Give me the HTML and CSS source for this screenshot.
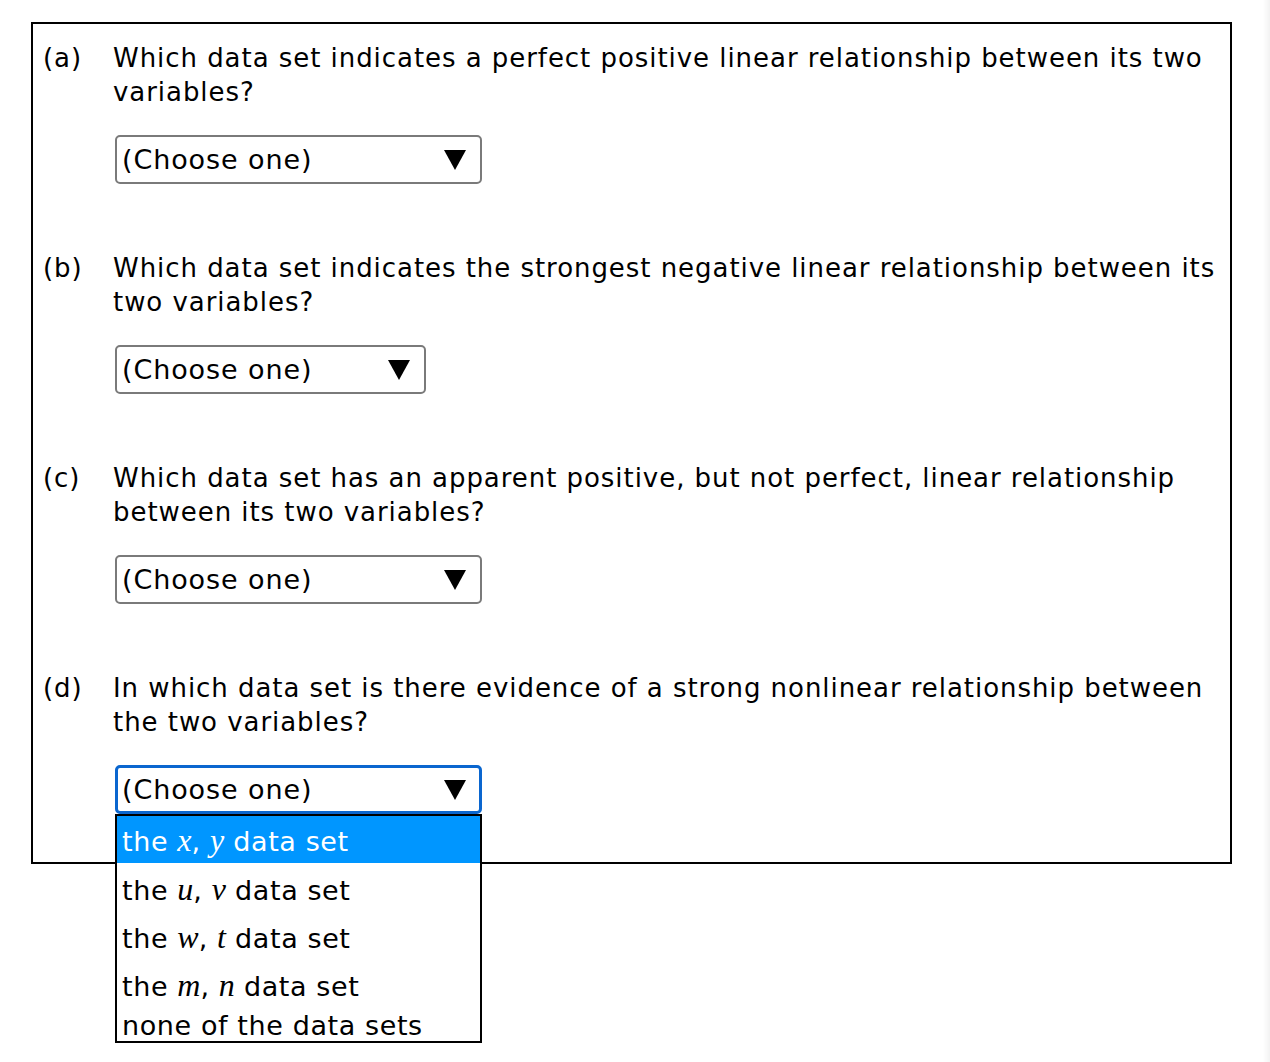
FILE: index.html
```html
<!DOCTYPE html>
<html>
<head>
<meta charset="utf-8">
<link rel="stylesheet" href="styles.css">
</head>
<body>
<div class="page">
  <div class="panel">
    <div class="q">
      <div class="qrow"><span class="lbl">(a)</span><div class="qtext">Which data set indicates a perfect positive linear relationship between its two variables?</div></div>
      <div class="sel sel-wide"><span>(Choose one)</span><svg class="arrow" viewBox="0 0 22 20"><polygon points="0,0 22,0 11,20"/></svg></div>
    </div>
    <div class="q">
      <div class="qrow"><span class="lbl">(b)</span><div class="qtext">Which data set indicates the strongest negative linear relationship between its two variables?</div></div>
      <div class="sel sel-narrow"><span>(Choose one)</span><svg class="arrow" viewBox="0 0 22 20"><polygon points="0,0 22,0 11,20"/></svg></div>
    </div>
    <div class="q">
      <div class="qrow"><span class="lbl">(c)</span><div class="qtext">Which data set has an apparent positive, but not perfect, linear relationship between its two variables?</div></div>
      <div class="sel sel-wide"><span>(Choose one)</span><svg class="arrow" viewBox="0 0 22 20"><polygon points="0,0 22,0 11,20"/></svg></div>
    </div>
    <div class="q">
      <div class="qrow"><span class="lbl">(d)</span><div class="qtext">In which data set is there evidence of a strong nonlinear relationship between the two variables?</div></div>
      <div class="sel sel-wide sel-focus"><span>(Choose one)</span><svg class="arrow" viewBox="0 0 22 20"><polygon points="0,0 22,0 11,20"/></svg>
        <ul class="list">
          <li class="opt active">the <i class="m">x</i>, <i class="m">y</i> data set</li>
          <li class="opt">the <i class="m">u</i>, <i class="m">v</i> data set</li>
          <li class="opt">the <i class="m">w</i>, <i class="m">t</i> data set</li>
          <li class="opt">the <i class="m">m</i>, <i class="m">n</i> data set</li>
          <li class="opt last">none of the data sets</li>
        </ul>
      </div>
    </div>
  </div>
</div>
<div class="edge"></div>
</body>
</html>
```
FILE: styles.css
```css
html, body {
  margin: 0;
  padding: 0;
  background: #fff;
}
body {
  font-family: "DejaVu Sans", Verdana, sans-serif;
  color: #000;
  min-height: 1062px;
}
.page {
  padding: 22px 0 200px 31px;
}
.panel {
  width: 1201px;
  box-sizing: border-box;
  border: 2px solid #000;
  padding: 17px 10px 48px 10px;
}
.q + .q {
  margin-top: 67px;
}
.qrow {
  display: flex;
  font-size: 26px;
  line-height: 34px;
  letter-spacing: 0.95px;
}
.lbl {
  flex: none;
  width: 70px;
}
.qtext {
  flex: 1;
}
.sel {
  position: relative;
  margin: 26px 0 0 72px;
  height: 49px;
  box-sizing: border-box;
  border: 2px solid #7a7a7a;
  border-radius: 5px;
  display: flex;
  align-items: center;
  justify-content: space-between;
  padding: 0 14px 0 5px;
  font-size: 27px;
  letter-spacing: 0.9px;
  background: #fff;
}
.sel-wide {
  width: 367px;
}
.sel-narrow {
  width: 311px;
}
.sel-focus {
  border: 3px solid #0a66cf;
  padding: 0 13px 0 4px;
}
.arrow {
  width: 22px;
  height: 20px;
  fill: #000;
}
.list {
  position: absolute;
  top: 46px;
  left: -3px;
  width: 367px;
  box-sizing: border-box;
  margin: 0;
  padding: 0;
  list-style: none;
  border: 2px solid #000;
  background: #fff;
  font-size: 27px;
  letter-spacing: 0.6px;
  z-index: 2;
}
.opt {
  height: 48px;
  line-height: 52px;
  padding-left: 5px;
  white-space: nowrap;
  overflow: hidden;
}
.opt.active {
  height: 47px;
  line-height: 49px;
  background: #0096ff;
  color: #fff;
}
.opt.last {
  height: 34px;
  line-height: 38px;
}
.m {
  font-family: "Liberation Serif", "Times New Roman", serif;
  font-style: italic;
  font-size: 32px;
  letter-spacing: 0;
}
.edge {
  position: fixed;
  top: 0;
  right: 0;
  width: 7px;
  height: 100%;
  background: linear-gradient(to right, rgba(0,0,0,0), rgba(0,0,0,0.05));
}
```
